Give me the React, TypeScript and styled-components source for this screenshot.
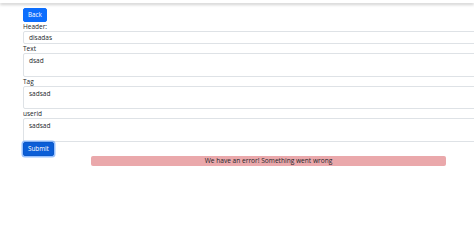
import React from "react";
import styled, { createGlobalStyle } from "styled-components";

const Global = createGlobalStyle`
  html, body { margin: 0; padding: 0; background: #fff; }
  body { font-family: "Open Sans", "Noto Sans", sans-serif; color: #212529; overflow: hidden; }
`;

const TopBar = styled.div`
  height: 3px;
  background: #fff;
  box-shadow: 0 2px 3px rgba(0, 0, 0, 0.18);
`;

const Page = styled.div`
  padding: 5px 0 0 23px;
  width: 451px;
  box-sizing: border-box;
`;

const Button = styled.button<{ $dark?: boolean }>`
  display: block;
  align-self: flex-start;
  box-sizing: border-box;
  height: 14px;
  padding: 0 4px;
  border: 1px solid ${(p) => (p.$dark ? "#0a58ca" : "#0d6efd")};
  border-radius: 2px;
  background: ${(p) => (p.$dark ? "#0b5ed7" : "#0d6efd")};
  color: #fff;
  font-family: inherit;
  font-size: 6.3px;
  line-height: 12px;
  box-shadow: ${(p) => (p.$dark ? "0 0 0 1.5px rgba(49,132,253,.5)" : "none")};
`;

const Label = styled.label`
  display: block;
  font-size: 6.5px;
  line-height: 9px;
`;

const Field = styled.div<{ $h: number }>`
  box-sizing: border-box;
  width: 470px;
  height: ${(p) => p.$h}px;
  border: 1px solid #dee2e6;
  border-radius: 2px;
  padding: ${(p) => (p.$h > 16 ? "3px" : "2px")} 5px;
  font-size: 6.5px;
  line-height: 8px;
  color: #212529;
`;

const Form = styled.form`
  display: flex;
  flex-direction: column;
`;

const Group = styled.div`
  display: flex;
  flex-direction: column;
`;

const Alert = styled.div`
  margin: 0 0 0 68px;
  width: 355px;
  height: 10px;
  background: #eaa8ab;
  border-radius: 2px;
  text-align: center;
  font-size: 6.6px;
  line-height: 10px;
  color: #212529;
`;

export default function App() {
  return (
    <>
      <Global />
      <TopBar />
      <Page>
        <Button>Back</Button>
        <Form>
          <Group>
            <Label>Header:</Label>
            <Field $h={13}>disadas</Field>
          </Group>
          <Group>
            <Label>Text</Label>
            <Field $h={24}>dsad</Field>
          </Group>
          <Group>
            <Label>Tag</Label>
            <Field $h={23}>sadsad</Field>
          </Group>
          <Group>
            <Label>userid</Label>
            <Field $h={24}>sadsad</Field>
          </Group>
          <Button $dark type="button">Submit</Button>
        </Form>
        <Alert>We have an error! Something went wrong</Alert>
      </Page>
    </>
  );
}
